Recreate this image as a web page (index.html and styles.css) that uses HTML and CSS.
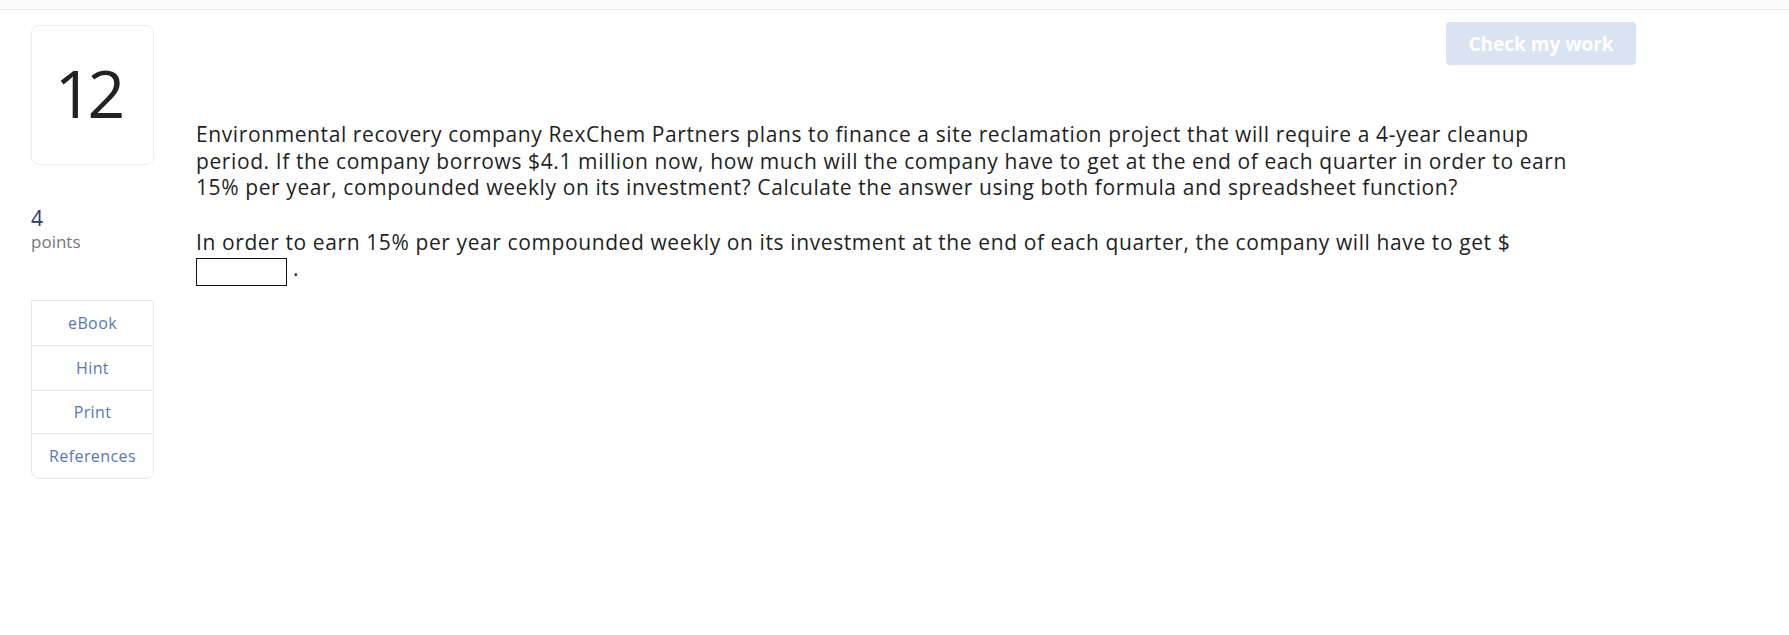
FILE: index.html
```html
<!DOCTYPE html>
<html lang="en">
<head>
<meta charset="utf-8">
<title>Question 12</title>
<link rel="stylesheet" href="styles.css">
</head>
<body>
<div class="topbar"></div>
<div class="page">
  <aside class="side">
    <div class="qnum">12</div>
    <div class="points">
      <div class="points-value">4</div>
      <div class="points-label">points</div>
    </div>
    <nav class="tools">
      <a class="tool">eBook</a>
      <a class="tool">Hint</a>
      <a class="tool tool-short">Print</a>
      <a class="tool">References</a>
    </nav>
  </aside>
  <main class="content">
    <div class="actions">
      <button class="check" disabled>Check my work</button>
    </div>
    <div class="question">
      <p class="para">Environmental recovery company RexChem Partners plans to finance a site reclamation project that will require a 4-year cleanup period. If the company borrows $4.1 million now, how much will the company have to get at the end of each quarter in order to earn 15% per year, compounded weekly on its investment? Calculate the answer using both formula and spreadsheet function?</p>
      <p class="para">In order to earn 15% per year compounded weekly on its investment at the end of each quarter, the company will have to get $ <input class="answer" type="text"> .</p>
    </div>
  </main>
</div>
</body>
</html>
```
FILE: styles.css
```css
html, body {
  margin: 0;
  padding: 0;
  background: #ffffff;
}
body {
  font-family: "Open Sans", Lato, sans-serif;
  color: #1f1f1f;
}
.topbar {
  height: 9px;
  background: #fafafa;
  border-bottom: 1px solid #ececec;
}
.page {
  display: flex;
  padding-left: 31px;
}
.side {
  width: 123px;
  flex: none;
  padding-top: 15px;
}
.qnum {
  box-sizing: border-box;
  height: 140px;
  border: 1px solid #ececec;
  border-radius: 8px;
  display: flex;
  align-items: center;
  justify-content: center;
  font-family: "Open Sans", sans-serif;
  font-size: 66px;
  letter-spacing: -5px;
  color: #222222;
  padding: 0 10px 6px 0;
}
.points {
  margin-top: 40px;
}
.points-value {
  font-size: 21px;
  line-height: 26px;
  color: #2b3a73;
}
.points-label {
  font-size: 17px;
  line-height: 22px;
  color: #777777;
}
.tools {
  margin-top: 47px;
  display: flex;
  flex-direction: column;
  border: 1px solid #e8e8e8;
  border-radius: 0 0 8px 8px;
}
.tool {
  height: 44px;
  display: flex;
  align-items: center;
  justify-content: center;
  font-size: 16px;
  letter-spacing: 0.4px;
  color: #5677bb;
  border-top: 1px solid #e8e8e8;
}
.tool:first-child {
  border-top: none;
}
.tool-short {
  height: 42px;
}
.content {
  margin-left: 42px;
  width: 1440px;
  padding-top: 12px;
}
.actions {
  display: flex;
  justify-content: flex-end;
}
.check {
  width: 190px;
  height: 43px;
  border: none;
  border-radius: 4px;
  background: #dae4f0;
  color: #ffffff;
  font-family: "Open Sans", sans-serif;
  font-weight: 700;
  font-size: 19px;
  padding: 0;
}
.question {
  margin-top: 56px;
  width: 1395px;
}
.para {
  margin: 0 0 28px 0;
  font-size: 21px;
  line-height: 26.6px;
  letter-spacing: 0.6px;
}
.answer {
  box-sizing: border-box;
  width: 91px;
  height: 28px;
  border: 1px solid #111111;
  margin: 2px 0 0 0;
  padding: 0;
  vertical-align: middle;
}
```
